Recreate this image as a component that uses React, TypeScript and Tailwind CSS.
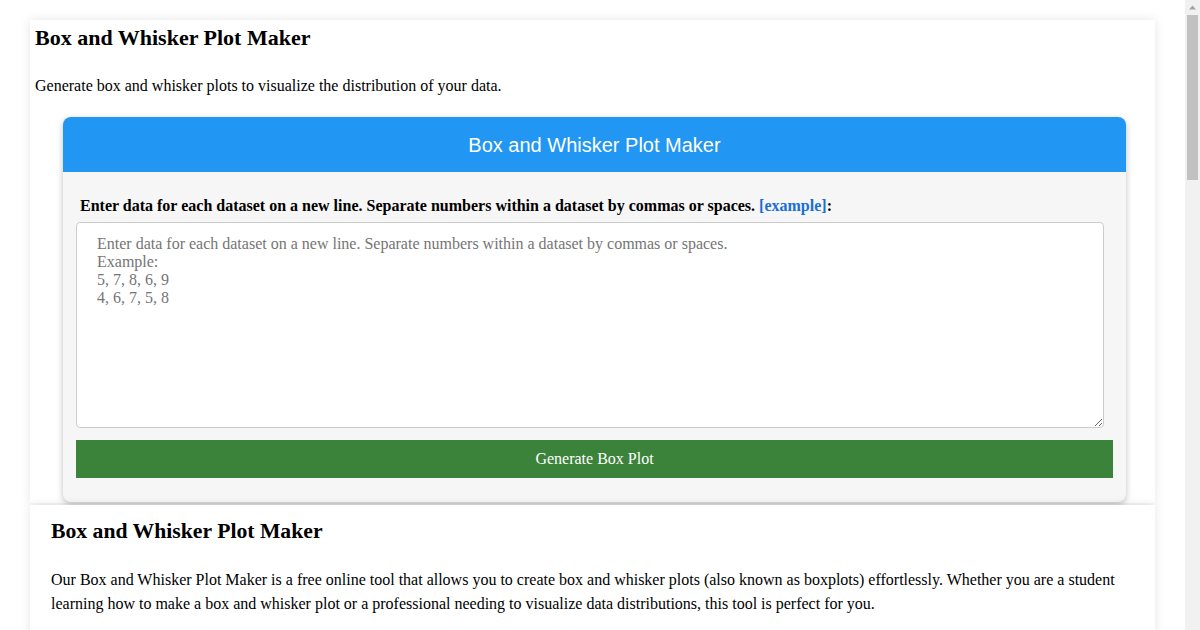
const BoxPlotMakerPage = () => {
  return (
    <div className="flex bg-white">
      <main className="min-h-screen w-[1185px] shrink-0 bg-white px-[30px] pt-5 pb-10 font-['Liberation_Serif',serif] text-black">
        <section className="bg-white px-[5px] pt-[3px] pb-px shadow-[0_0_10px_rgba(0,0,0,0.1)]">
          <h1 className="text-[22px] font-bold leading-[29px]">Box and Whisker Plot Maker</h1>
          <p className="mt-[25px] text-[16px] leading-[18px]">
            Generate box and whisker plots to visualize the distribution of your data.
          </p>

          <div className="mt-[22px] ml-[28px] w-[1063px] overflow-hidden rounded-lg bg-[#f6f6f6] shadow-[0_2px_6px_rgba(0,0,0,0.25)]">
            <div className="flex h-[55px] items-center justify-center bg-[#2196f3] font-['Liberation_Sans',Arial,sans-serif] text-[20px] text-white">
              Box and Whisker Plot Maker
            </div>
            <div className="px-[13px] pt-[25px] pb-[24px]">
              <label className="block pl-1 text-[16px] font-bold leading-[18px]">
                Enter data for each dataset on a new line. Separate numbers within a dataset by commas or spaces.{" "}
                <a href="#" className="text-[#1a6fd6]">[example]</a>:
              </label>
              <textarea
                className="mt-[7px] block h-[206px] w-[1028px] rounded border border-[#ccc] bg-white px-5 pt-[12px] pb-[8px] font-['Liberation_Serif',serif] text-[16px] leading-[18px] text-black placeholder:text-[#757575] focus:outline-none"
                placeholder={
                  "Enter data for each dataset on a new line. Separate numbers within a dataset by commas or spaces.\nExample:\n5, 7, 8, 6, 9\n4, 6, 7, 5, 8"
                }
              />
              <button className="mt-3 block h-[38px] w-full bg-[#3b823a] font-['Liberation_Serif',serif] text-[16px] text-white">
                Generate Box Plot
              </button>
            </div>
          </div>
        </section>

        <section className="mt-[2px] bg-white px-[21px] pt-[14px] pb-6 shadow-[0_0_10px_rgba(0,0,0,0.1)]">
          <h2 className="text-[21.7px] font-bold leading-[25px]">Box and Whisker Plot Maker</h2>
          <p className="mt-[24px] text-[16px] leading-[24px]">
            Our Box and Whisker Plot Maker is a free online tool that allows you to create box and whisker plots (also known as boxplots) effortlessly. Whether you are a student learning how to make a box and whisker plot or a professional needing to visualize data distributions, this tool is perfect for you.
          </p>
          <h2 className="mt-6 text-[21.7px] font-bold leading-[25px]">How to Use the Box Plot Maker</h2>
          <p className="mt-4 text-[16px] leading-[24px]">
            Enter each dataset on its own line, separating the numbers with commas or spaces, then press Generate Box Plot to see the minimum, quartiles, median and maximum of every dataset.
          </p>
        </section>
      </main>

      {/* scrollbar track */}
      <div className="fixed top-0 right-0 flex h-screen w-[15px] flex-col items-center bg-[#f1f1f1]">
        <svg width="15" height="15" viewBox="0 0 15 15" className="shrink-0">
          <path d="M4 9.5 L7.5 5.5 L11 9.5 Z" fill="#a3a3a3" />
        </svg>
        <div className="h-[165px] w-[11px] bg-[#c1c1c1]" />
      </div>
    </div>
  );
};

export default BoxPlotMakerPage;
